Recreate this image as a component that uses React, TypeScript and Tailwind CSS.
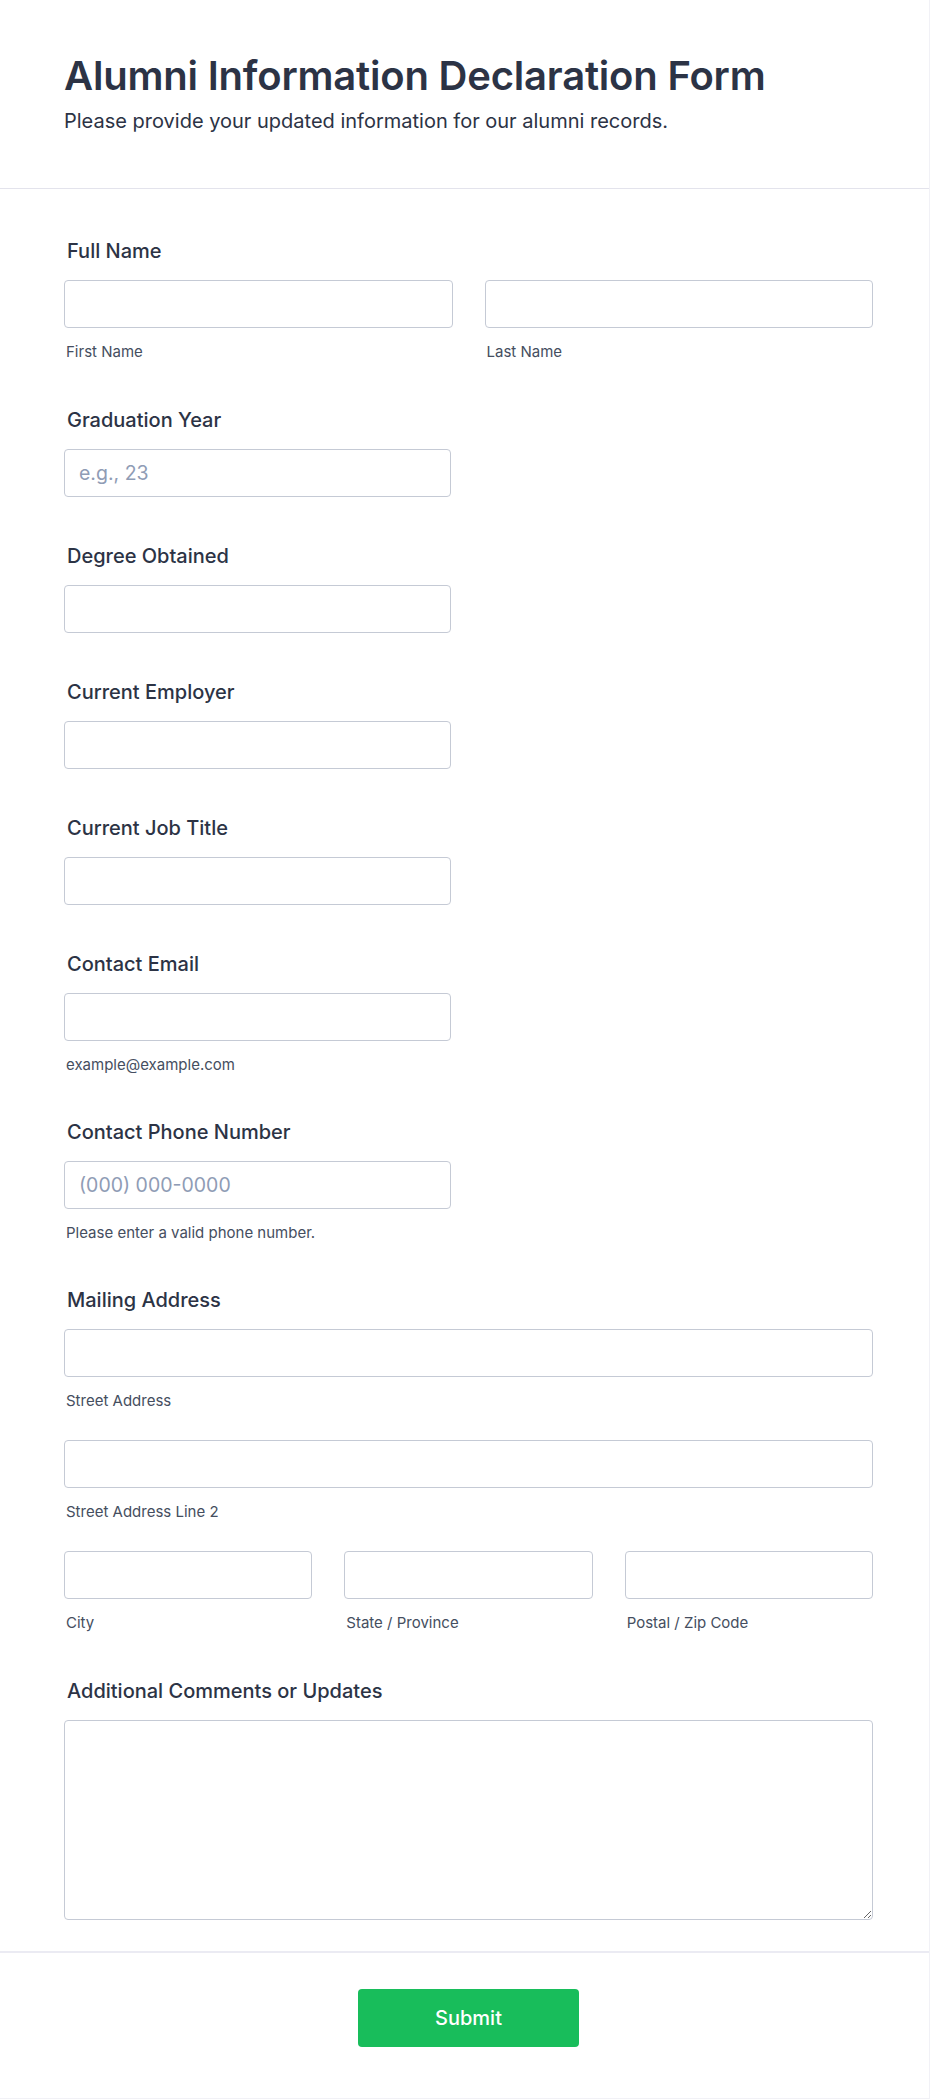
import React from 'react';

const inputCls =
    'block w-full h-12 rounded border border-[#c5cad5] bg-white px-3.5 text-[19.5px] text-[#2c3345] placeholder:text-[#8f9cb5] outline-none';

function Label({ children }: { children: React.ReactNode }) {
    return <label className="block pl-[3px] text-[20px] leading-7 font-medium text-[#2c3345]">{children}</label>;
}

function Sub({ children }: { children: React.ReactNode }) {
    return <span className="block mt-3.5 pl-[2px] text-[15px] leading-5 text-[#454e60]">{children}</span>;
}

function Field({ label, placeholder, sub }: { label: string; placeholder?: string; sub?: string }) {
    return (
        <div className={sub ? 'pt-[22px] pb-[21px]' : 'pt-[22px] pb-[23px]'}>
            <Label>{label}</Label>
            <div className="mt-[15px] w-[387px]">
                <input className={inputCls} placeholder={placeholder} />
                {sub && <Sub>{sub}</Sub>}
            </div>
        </div>
    );
}

export default function App() {
    return (
        <div className="w-[930px] min-h-[2099px] bg-white border-r border-b border-[#f1f1f6] font-['Inter',sans-serif] text-[#2c3345]">
            <header className="pt-[52px] pb-[53px] pl-16 pr-14 border-b border-[#e3e3ec]">
                <h1 className="text-[40px] leading-[48px] font-semibold tracking-[-0.2px]">Alumni Information Declaration Form</h1>
                <p className="mt-[7px] text-[20px] leading-7">Please provide your updated information for our alumni records.</p>
            </header>

            <form className="pt-[26px] pb-[9px] pl-16 pr-14">
                <div className="py-[22px]">
                    <Label>Full Name</Label>
                    <div className="mt-[15px] grid grid-cols-2 gap-8">
                        <div>
                            <input className={inputCls} />
                            <Sub>First Name</Sub>
                        </div>
                        <div>
                            <input className={inputCls} />
                            <Sub>Last Name</Sub>
                        </div>
                    </div>
                </div>

                <Field label="Graduation Year" placeholder="e.g., 23" />
                <Field label="Degree Obtained" />
                <Field label="Current Employer" />
                <Field label="Current Job Title" />
                <Field label="Contact Email" sub="example@example.com" />
                <Field label="Contact Phone Number" placeholder="(000) 000-0000" sub="Please enter a valid phone number." />

                <div className="pt-[22px] pb-[22px]">
                    <Label>Mailing Address</Label>
                    <div className="mt-[15px] flex flex-col gap-[29px]">
                        <div>
                            <input className={inputCls} />
                            <Sub>Street Address</Sub>
                        </div>
                        <div>
                            <input className={inputCls} />
                            <Sub>Street Address Line 2</Sub>
                        </div>
                        <div className="grid grid-cols-3 gap-8">
                            <div>
                                <input className={inputCls} />
                                <Sub>City</Sub>
                            </div>
                            <div>
                                <input className={inputCls} />
                                <Sub>State / Province</Sub>
                            </div>
                            <div>
                                <input className={inputCls} />
                                <Sub>Postal / Zip Code</Sub>
                            </div>
                        </div>
                    </div>
                </div>

                <div className="pt-[22px] pb-[22px]">
                    <Label>Additional Comments or Updates</Label>
                    <textarea className="mt-[15px] block w-full h-[200px] rounded border border-[#c5cad5] bg-white px-3.5 py-2.5 text-[19.5px] outline-none" />
                </div>
            </form>

            <div className="border-t-2 border-[#ebebf3] pl-16 pr-14 pt-9 pb-[50px] flex justify-center">
                <button className="w-[221px] h-[58px] rounded bg-[#18bd5b] text-white text-[20px] font-medium">Submit</button>
            </div>
        </div>
    );
}
